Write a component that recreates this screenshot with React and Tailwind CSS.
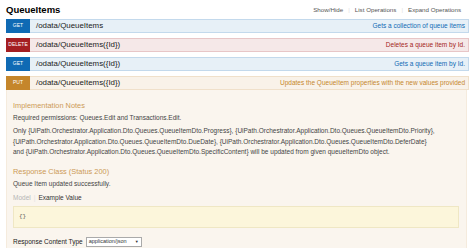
import React from 'react';

const ops = [
  {
    method: 'GET',
    path: '/odata/QueueItems',
    summary: 'Gets a collection of queue items',
    badge: 'bg-[#0f6ab4]',
    row: 'bg-[#e7f0f7] border-[#c3d9ec]',
    text: 'text-[#0f6ab4]',
  },
  {
    method: 'DELETE',
    path: '/odata/QueueItems({Id})',
    summary: 'Deletes a queue item by Id.',
    badge: 'bg-[#a41e22]',
    row: 'bg-[#f5e8e8] border-[#e8c6c7]',
    text: 'text-[#a41e22]',
  },
  {
    method: 'GET',
    path: '/odata/QueueItems({Id})',
    summary: 'Gets a queue item by Id.',
    badge: 'bg-[#0f6ab4]',
    row: 'bg-[#e7f0f7] border-[#c3d9ec]',
    text: 'text-[#0f6ab4]',
  },
  {
    method: 'PUT',
    path: '/odata/QueueItems({Id})',
    summary: 'Updates the QueueItem properties with the new values provided',
    badge: 'bg-[#c5862b]',
    row: 'bg-[#f9f2e9] border-[#f0e0ca]',
    text: 'text-[#c5862b]',
  },
];

const OpRow = ({ op }) => (
  <div className={`flex items-center h-[14px] border ${op.row}`}>
    <span
      className={`${op.badge} w-[24px] h-[14px] -my-px -ml-px flex items-center justify-center text-white text-[5px] uppercase`}
    >
      {op.method}
    </span>
    <span className="ml-[6px] text-[7.9px] text-[#222]">{op.path}</span>
    <span className={`ml-auto mr-[3px] text-[6.5px] ${op.text}`}>{op.summary}</span>
  </div>
);

const App = () => {
  return (
    <div
      className="w-[474px] h-[248px] overflow-hidden bg-white pl-[6px] pr-[5px] pt-[3px]"
      style={{ fontFamily: '"Liberation Sans", Arial, sans-serif' }}
    >
      {/* Header */}
      <div className="flex items-center justify-between h-[14px] pr-[8px]">
        <h2 className="text-[9.5px] font-bold text-black">QueueItems</h2>
        <div className="flex items-center text-[6.2px] text-[#555]">
          <span>Show/Hide</span>
          <span className="mx-[5px] text-[#ddd]">|</span>
          <span>List Operations</span>
          <span className="mx-[5px] text-[#ddd]">|</span>
          <span>Expand Operations</span>
        </div>
      </div>

      {/* Operations */}
      <div className="mt-[2px] flex flex-col gap-[5px]">
        {ops.map((op, i) => (
          <OpRow key={i} op={op} />
        ))}
      </div>

      {/* Expanded PUT content */}
      <div className="mr-[2px] bg-[#faf5ee] border-x border-[#f5ebdd] px-[6px] pt-[11px] h-[200px]">
        <h4 className="text-[7.4px] text-[#cc9a56] leading-[10px]">Implementation Notes</h4>
        <p className="text-[6.5px] text-[#444] leading-[10px] mt-[2px]">
          Required permissions: Queues.Edit and Transactions.Edit.
        </p>
        <p className="text-[6.5px] text-[#444] leading-[10.5px] mt-[3px] pr-[4px]">
          Only {'{UiPath.Orchestrator.Application.Dto.Queues.QueueItemDto.Progress}'},{' '}
          {'{UiPath.Orchestrator.Application.Dto.Queues.QueueItemDto.Priority}'},
          <br />
          {'{UiPath.Orchestrator.Application.Dto.Queues.QueueItemDto.DueDate}'},{' '}
          {'{UiPath.Orchestrator.Application.Dto.Queues.QueueItemDto.DeferDate}'}
          <br />
          and {'{UiPath.Orchestrator.Application.Dto.Queues.QueueItemDto.SpecificContent}'} will be updated
          from given queueItemDto object.
        </p>

        <h4 className="text-[7.4px] text-[#cc9a56] leading-[10px] mt-[9px]">
          Response Class (Status 200)
        </h4>
        <p className="text-[6.5px] text-[#444] leading-[10px] mt-[2px]">Queue Item updated successfully.</p>

        <div className="flex items-center text-[6.5px] mt-[4px] h-[10px]">
          <span className="text-[#b5b5b5]">Model</span>
          <span className="mx-[3px] text-[#e2e2e2]">|</span>
          <span className="text-[#333]">Example Value</span>
        </div>

        <div className="mt-[3px] mr-[1px] h-[22px] bg-[#fcf6db] border border-[#efe7c4] flex items-center pl-[5px]">
          <span className="text-[6px] text-[#555]" style={{ fontFamily: '"Liberation Mono", monospace' }}>
            {'{}'}
          </span>
        </div>

        <div className="mt-[9px] flex items-center h-[10px] text-[6.5px] text-[#222]">
          <span>Response Content Type</span>
          <span className="ml-[3px] h-[10px] w-[56px] flex items-center justify-between px-[2px] border border-[#aaa] bg-white text-[5.5px] text-[#333]">
            application/json
            <span className="text-[4px]">▼</span>
          </span>
        </div>
      </div>
    </div>
  );
};

export default App;
